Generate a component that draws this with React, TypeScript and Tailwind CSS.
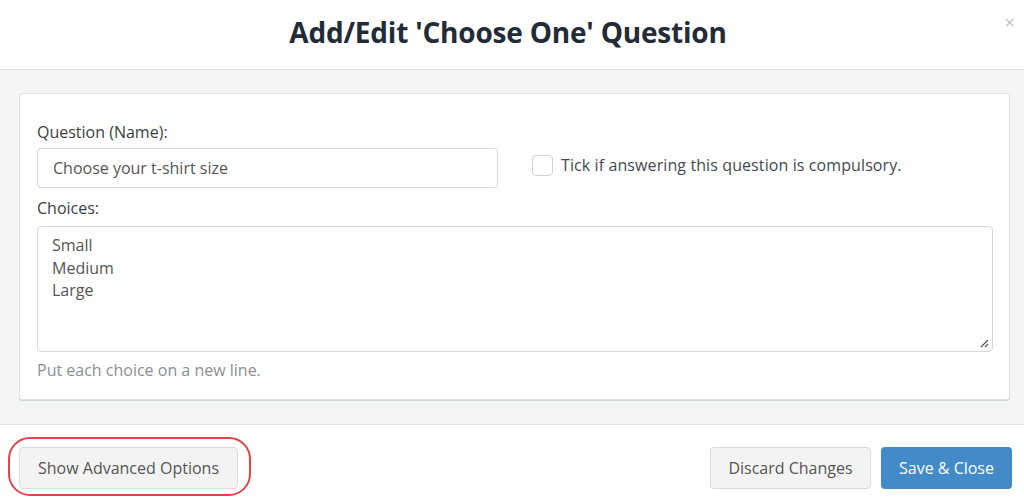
import React from "react";

export default function App() {
  return (
    <div
      className="w-[1024px] h-[501px] bg-white overflow-hidden flex flex-col"
      style={{ fontFamily: '"Open Sans", "Noto Sans", sans-serif' }}
    >
      {/* Header */}
      <div className="relative h-[70px] shrink-0 border-b border-[#e2e5e7] flex items-center justify-center pr-[8px]">
        <h1 className="text-[28px] font-bold text-[#222b36] tracking-[-0.2px] pb-[5px]">
          Add/Edit 'Choose One' Question
        </h1>
        <span className="absolute right-[9px] top-[13px] text-[19px] leading-none text-[#c4c4c4]">
          ×
        </span>
      </div>

      {/* Body */}
      <div className="h-[355px] shrink-0 bg-[#f4f5f5] border-b border-[#e0e4e6] pt-[23px] pl-[19px] pr-[14px]">
        <div className="h-[307px] bg-white border border-[#dfe3e6] rounded-[3px] shadow-[0_1px_0_#cdd6de] pt-[27px] px-[17px]">
          <div className="text-[16px] leading-[22px] text-[#3a3f44]">Question (Name):</div>
          <div className="mt-[5px] flex items-center">
            <div className="w-[461px] h-[40px] border border-[#d5dadd] rounded-[4px] flex items-center pl-[15px] text-[16px] text-[#555]">
              Choose your t-shirt size
            </div>
            <div className="ml-[34px] mt-[-6px] flex items-center">
              <div className="w-[21px] h-[21px] border border-[#cfd3d6] rounded-[4px] bg-white" />
              <span className="ml-[8px] text-[16px] text-[#444a50] tracking-[0.1px]">
                Tick if answering this question is compulsory.
              </span>
            </div>
          </div>
          <div className="mt-[9px] text-[16px] leading-[22px] text-[#3a3f44]">Choices:</div>
          <div className="relative mt-[7px] w-[956px] h-[126px] border border-[#d5dadd] rounded-[4px] pl-[14px] pt-[7px] text-[16px] leading-[22.5px] text-[#555]">
            <div>Small</div>
            <div>Medium</div>
            <div>Large</div>
            <svg
              className="absolute right-[3px] bottom-[3px]"
              width="9"
              height="9"
              viewBox="0 0 9 9"
            >
              <path d="M8 1 L1 8 M8 5 L5 8" stroke="#555" strokeWidth="1.2" />
            </svg>
          </div>
          <div className="mt-[7px] text-[16px] leading-[22px] text-[#8a8f93]">
            Put each choice on a new line.
          </div>
        </div>
      </div>

      {/* Footer */}
      <div className="relative flex-1 flex items-start justify-between pt-[22px] pl-[19px] pr-[12px]">
        <button className="h-[42px] w-[219px] bg-[#f3f3f3] border border-[#dcdcdc] rounded-[4px] text-[16px] text-[#555]">
          Show Advanced Options
        </button>
        <div className="flex gap-[10px]">
          <button className="h-[42px] w-[161px] bg-[#f3f3f3] border border-[#dcdcdc] rounded-[4px] text-[16px] text-[#555]">
            Discard Changes
          </button>
          <button className="h-[42px] w-[131px] bg-[#438bc8] rounded-[4px] text-[16px] text-white">
            Save &amp; Close
          </button>
        </div>
        <div className="absolute left-[8px] top-[12px] w-[243px] h-[59px] border-2 border-[#e0454a] rounded-[22px] pointer-events-none" />
      </div>
    </div>
  );
}
